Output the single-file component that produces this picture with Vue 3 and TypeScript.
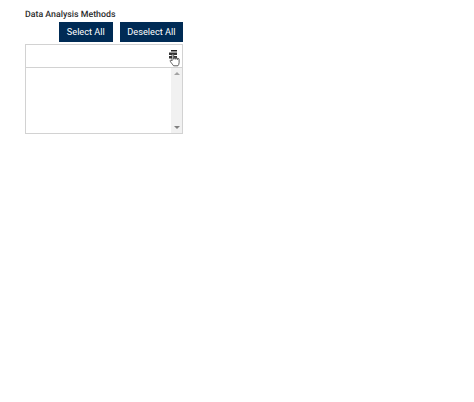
<script setup lang="ts">
const title = 'Data Analysis Methods'
</script>

<template>
  <div class="page">
    <div class="widget">
      <div class="title">{{ title }}</div>
      <div class="actions">
        <button class="btn btn-select">Select All</button>
        <button class="btn">Deselect All</button>
      </div>
      <div class="filter">
        <span class="filter-icon">
          <svg width="14" height="20" viewBox="0 0 14 20">
            <rect x="4" y="0" width="6" height="1.500" fill="#222" />
            <rect x="2" y="2.500" width="8" height="2.500" fill="#333" />
            <rect x="2" y="6" width="8" height="2.500" fill="#333" />
            <path
              d="M5 5c0-1.200 1.700-1.200 1.700 0v4.200l.5-.1v-1c0-1 1.500-1 1.500 0v1.100h.4v-.6c0-1 1.400-1 1.400 0v.9h.3v-.3c0-.9 1.300-.9 1.300 0v3.500c0 1.400-.6 2.300-1.200 3.100H6.600c-.9-1.100-2.800-3.500-3.300-4.500-.5-1 .6-1.600 1.300-.9l.4.500z"
              fill="#fff"
              stroke="#333"
              stroke-width="0.800"
            />
          </svg>
        </span>
      </div>
      <div class="list">
        <div class="scroll">
          <span class="arrow arrow-up"></span>
          <span class="arrow arrow-down"></span>
        </div>
      </div>
    </div>
  </div>
</template>

<style scoped>
.page {
  padding: 8px 0 0 25px;
  font-family: Roboto, "Liberation Sans", sans-serif;
  text-rendering: geometricPrecision;
}
.widget {
  width: 158px;
}
.title {
  font-size: 8.800px;
  font-weight: 500;
  line-height: 14px;
  color: #2b2b2b;
}
.actions {
  display: flex;
  justify-content: flex-end;
  gap: 7.500px;
  padding-right: 0.500px;
}
.btn {
  height: 20px;
  padding: 0 7px;
  border: none;
  border-radius: 0;
  background: #002b55;
  color: #fff;
  font-family: inherit;
  font-size: 9.200px;
  line-height: 20px;
}
.btn-select {
  padding: 0 8px;
}
.filter {
  height: 22px;
  margin-top: 2px;
  border: 1px solid #d2d2d2;
  position: relative;
}
.filter-icon {
  position: absolute;
  right: 1px;
  top: 5px;
  height: 20px;
}
.list {
  height: 65px;
  border: 1px solid #d2d2d2;
  border-top: none;
  display: flex;
  justify-content: flex-end;
}
.scroll {
  width: 11px;
  background: #f1f1f1;
  position: relative;
}
.arrow {
  position: absolute;
  left: 3px;
  width: 0;
  height: 0;
  border-left: 3px solid transparent;
  border-right: 3px solid transparent;
}
.arrow-up {
  top: 4px;
  border-bottom: 3px solid #a3a3a3;
}
.arrow-down {
  bottom: 4px;
  border-top: 3px solid #808080;
}
</style>
